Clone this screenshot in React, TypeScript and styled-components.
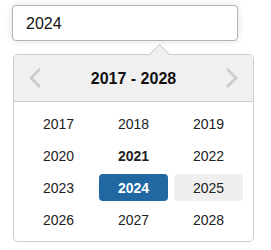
import React from "react";
import styled, { createGlobalStyle } from "styled-components";

const Global = createGlobalStyle`
  html, body { margin: 0; padding: 0; background: #fff; }
  body { font-family: "Liberation Sans", Arial, sans-serif; }
`;

const Page = styled.div`
  padding: 5px 0 0 12px;
  width: 271px;
  height: 250px;
  box-sizing: border-box;
`;

const Input = styled.input`
  display: block;
  box-sizing: border-box;
  width: 226px;
  height: 36px;
  border: 1px solid #b3b3b3;
  border-radius: 4px;
  padding: 2px 0 0 13px;
  font-family: "Liberation Sans", Arial, sans-serif;
  font-size: 16px;
  color: #111;
  box-shadow: 0 0 7px rgba(0, 0, 0, 0.13);
  outline: none;
`;

const Popup = styled.div`
  position: relative;
  box-sizing: border-box;
  width: 241px;
  margin: 13px 0 0 1px;
  border: 1px solid #cdcdcd;
  border-radius: 5px;
  background: #fff;
`;

const Arrow = styled.div`
  position: absolute;
  top: -8px;
  left: 138px;
  width: 14px;
  height: 14px;
  background: #f0f0f0;
  border-top: 1px solid #cdcdcd;
  border-left: 1px solid #cdcdcd;
  transform: rotate(45deg);
  z-index: 1;
`;

const Header = styled.div`
  position: relative;
  height: 46px;
  display: flex;
  align-items: center;
  justify-content: space-between;
  padding: 0 14px;
  background: #f0f0f0;
  border-bottom: 1px solid #cfcfcf;
  border-radius: 4px 4px 0 0;
`;

const Title = styled.div`
  position: relative;
  z-index: 2;
  font-size: 16px;
  font-weight: bold;
  color: #111;
  padding-top: 1px;
`;

const Nav = styled.svg`
  position: relative;
  z-index: 2;
  width: 14px;
  height: 22px;
  display: block;
`;

const Grid = styled.div`
  display: grid;
  grid-template-columns: repeat(3, 69px);
  column-gap: 6px;
  row-gap: 5px;
  padding: 8px 0 8px 10px;
`;

const Cell = styled.div<{ $sel?: boolean; $hover?: boolean; $bold?: boolean }>`
  height: 27px;
  display: flex;
  align-items: center;
  justify-content: center;
  border-radius: 4px;
  font-size: 14px;
  color: ${(p) => (p.$sel ? "#fff" : "#222")};
  font-weight: ${(p) => (p.$sel || p.$bold ? "bold" : "normal")};
  background: ${(p) => (p.$sel ? "#2167a1" : p.$hover ? "#efefef" : "transparent")};
`;

const years = Array.from({ length: 12 }, (_, i) => 2017 + i);

export default function App() {
  return (
    <Page>
      <Global />
      <Input defaultValue="2024" />
      <Popup>
        <Arrow />
        <Header>
          <Nav viewBox="0 0 14 22">
            <path d="M12 2 L3 11 L12 20" fill="none" stroke="#cbcbcb" strokeWidth="2.6" />
          </Nav>
          <Title>2017 - 2028</Title>
          <Nav viewBox="0 0 14 22">
            <path d="M2 2 L11 11 L2 20" fill="none" stroke="#cbcbcb" strokeWidth="2.6" />
          </Nav>
        </Header>
        <Grid>
          {years.map((y) => (
            <Cell key={y} $sel={y === 2024} $hover={y === 2025} $bold={y === 2021}>
              {y}
            </Cell>
          ))}
        </Grid>
      </Popup>
    </Page>
  );
}
